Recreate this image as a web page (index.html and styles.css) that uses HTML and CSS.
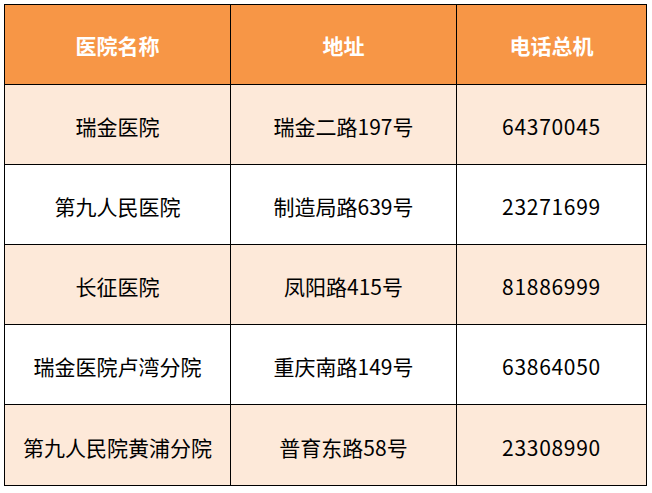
FILE: index.html
```html
<!DOCTYPE html>
<html lang="zh-CN">
<head>
<meta charset="utf-8">
<link rel="stylesheet" href="styles.css">
</head>
<body>
<table class="hospitals">
  <colgroup>
    <col class="c-name">
    <col class="c-addr">
    <col class="c-phone">
  </colgroup>
  <thead>
    <tr>
      <th>医院名称</th>
      <th>地址</th>
      <th>电话总机</th>
    </tr>
  </thead>
  <tbody>
    <tr class="band"><td>瑞金医院</td><td>瑞金二路197号</td><td class="phone">64370045</td></tr>
    <tr><td>第九人民医院</td><td>制造局路639号</td><td class="phone">23271699</td></tr>
    <tr class="band"><td>长征医院</td><td>凤阳路415号</td><td class="phone">81886999</td></tr>
    <tr><td>瑞金医院卢湾分院</td><td>重庆南路149号</td><td class="phone">63864050</td></tr>
    <tr class="band last"><td>第九人民院黄浦分院</td><td>普育东路58号</td><td class="phone">23308990</td></tr>
  </tbody>
</table>
</body>
</html>
```
FILE: styles.css
```css
html, body {
  margin: 0;
  padding: 0;
  background: #ffffff;
}
body {
  padding: 4px 0 0 4px;
  font-family: "Noto Sans CJK SC", "Noto Sans", sans-serif;
}
.hospitals {
  border-collapse: collapse;
  table-layout: fixed;
  width: 642px;
}
.c-name { width: 226px; }
.c-addr { width: 226px; }
.c-phone { width: 190px; }
.hospitals th,
.hospitals td {
  border: 1px solid #000000;
  box-sizing: border-box;
  height: 80px;
  padding: 3px 0 0 0;
  text-align: center;
  vertical-align: middle;
  font-size: 21px;
  line-height: 24px;
  color: #000000;
  white-space: nowrap;
}
.hospitals .last td {
  height: 81px;
}
.hospitals th {
  background: #f79646;
  color: #ffffff;
  font-weight: bold;
  padding-top: 1px;
}
.hospitals td.phone {
  letter-spacing: 0.7px;
}
.band td {
  background: #fde9d9;
}
```
